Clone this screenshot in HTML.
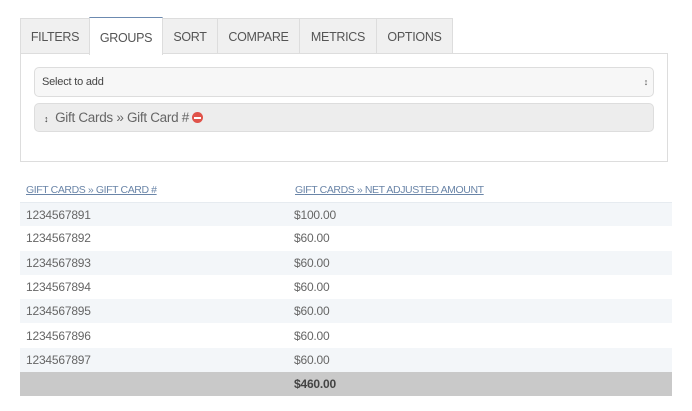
<!DOCTYPE html>
<html><head><style>
*{box-sizing:border-box;margin:0;padding:0}
body{width:692px;height:411px;background:#fff;font-family:"Liberation Sans",sans-serif;color:#555;position:relative;overflow:hidden}
.tab{position:absolute;top:18px;height:36px;background:#f0f0f0;border:1px solid #ddd;border-bottom:none;font-size:12.5px;color:#555;text-align:center;line-height:36px;letter-spacing:-0.3px}
.tab.active{background:#fff;border-top:1px solid #6c8ab0;top:17px;height:38px;line-height:40px;z-index:2}
.panel{position:absolute;left:20px;top:53px;width:648px;height:109px;border:1px solid #ddd;background:#fff}
.sel{position:absolute;left:34px;top:67px;width:620px;height:30px;border:1px solid #ddd;border-radius:5px;background:#f7f7f7;font-size:11px;line-height:28px;padding-left:7px;color:#444;letter-spacing:-0.2px}
.grp{position:absolute;left:34px;top:103px;width:620px;height:29px;border:1px solid #ddd;border-radius:5px;background:#ededed;font-size:13.5px;line-height:27px;padding-left:9px;color:#666;letter-spacing:-0.3px}
.hdr{position:absolute;top:184px;font-size:10.5px;color:#6a85a8;text-decoration:underline;letter-spacing:-0.4px}
.row{position:absolute;left:20px;width:652px;height:24.3px;font-size:12px;line-height:24px;color:#666;letter-spacing:-0.2px}
.row span{position:absolute}
.row .a{left:6px}.row .b{left:274px}
</style></head><body>
<div class="tab" style="left:20px;width:70px">FILTERS</div>
<div class="tab active" style="left:89px;width:74px">GROUPS</div>
<div class="tab" style="left:162px;width:56px">SORT</div>
<div class="tab" style="left:217px;width:83px">COMPARE</div>
<div class="tab" style="left:299px;width:78px">METRICS</div>
<div class="tab" style="left:376px;width:77px">OPTIONS</div>
<div class="panel"></div>
<div class="sel">Select to add<span style="position:absolute;right:5px;top:0;font-size:9px;color:#555">&#x2195;</span></div>
<div class="grp"><span style="font-size:9px;color:#333">&#x2195;</span>&nbsp; Gift Cards » Gift Card # <span style="display:inline-block;width:11px;height:11px;border-radius:50%;background:#e0534a;vertical-align:-1px;position:relative"><span style="position:absolute;left:2px;top:4.5px;width:7px;height:2px;background:#fff"></span></span></div>
<div class="hdr" style="left:26px">GIFT CARDS » GIFT CARD #</div>
<div class="hdr" style="left:295px">GIFT CARDS » NET ADJUSTED AMOUNT</div>
<div class="row" style="top:202px;background:#f3f6f9;border-top:1px solid #e6ebf0"><span class="a">1234567891</span><span class="b">$100.00</span></div>
<div class="row" style="top:226.3px"><span class="a">1234567892</span><span class="b">$60.00</span></div>
<div class="row" style="top:250.6px;background:#f3f6f9"><span class="a">1234567893</span><span class="b">$60.00</span></div>
<div class="row" style="top:274.9px"><span class="a">1234567894</span><span class="b">$60.00</span></div>
<div class="row" style="top:299.2px;background:#f3f6f9"><span class="a">1234567895</span><span class="b">$60.00</span></div>
<div class="row" style="top:323.5px"><span class="a">1234567896</span><span class="b">$60.00</span></div>
<div class="row" style="top:347.8px;background:#f3f6f9"><span class="a">1234567897</span><span class="b">$60.00</span></div>
<div class="row" style="top:372px;background:#c9c9c9;height:24px;color:#444;font-weight:bold"><span class="b">$460.00</span></div>
</body></html>
